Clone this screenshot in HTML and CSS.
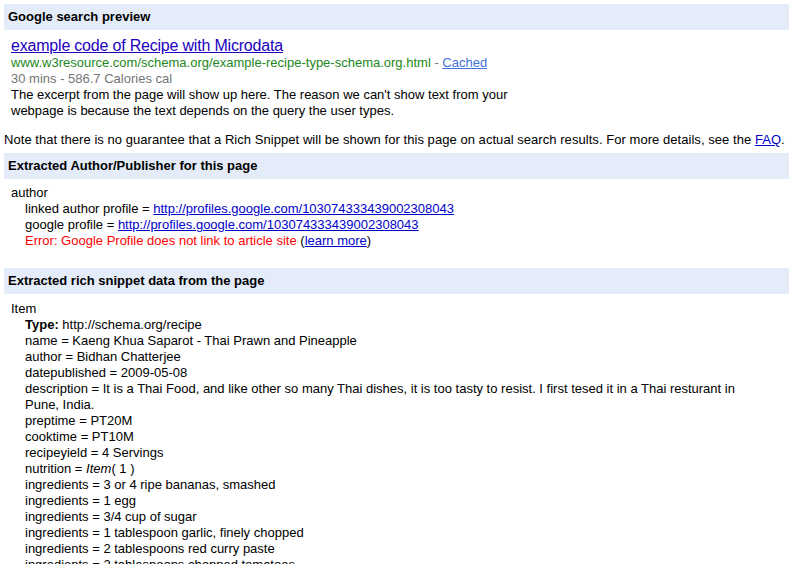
FILE: index.html
```html
<!DOCTYPE html>
<html>
<head>
<meta charset="utf-8">
<title>Rich Snippets Testing Tool</title>
<link rel="stylesheet" href="styles.css">
</head>
<body>
<div class="section-head">Google search preview</div>
<div class="preview">
  <div class="title"><a href="#">example code of Recipe with Microdata</a></div>
  <div class="url">www.w3resource.com/schema.org/example-recipe-type-schema.org.html<span class="sep"> - </span><a class="cached" href="#">Cached</a></div>
  <div class="meta">30 mins - 586.7 Calories cal</div>
  <div class="excerpt">The excerpt from the page will show up here. The reason we can't show text from your<br>webpage is because the text depends on the query the user types.</div>
</div>
<p class="note">Note that there is no guarantee that a Rich Snippet will be shown for this page on actual search results. For more details, see the <a href="#">FAQ</a>.</p>
<div class="section-head">Extracted Author/Publisher for this page</div>
<div class="block author-block">
  <div>author</div>
  <div class="indent">
    <div>linked author profile = <a href="#">http://profiles.google.com/103074333439002308043</a></div>
    <div>google profile = <a href="#">http://profiles.google.com/103074333439002308043</a></div>
    <div class="error">Error: Google Profile does not link to article site <span class="plain">(<a href="#">learn more</a>)</span></div>
  </div>
</div>
<div class="section-head">Extracted rich snippet data from the page</div>
<div class="block item-block">
  <div>Item</div>
  <div class="indent">
    <div><b>Type:</b> http://schema.org/recipe</div>
    <div>name = Kaeng Khua Saparot - Thai Prawn and Pineapple</div>
    <div>author = Bidhan Chatterjee</div>
    <div>datepublished = 2009-05-08</div>
    <div>description = It is a Thai Food, and like other so many Thai dishes, it is too tasty to resist. I first tesed it in a Thai resturant in Pune, India.</div>
    <div>preptime = PT20M</div>
    <div>cooktime = PT10M</div>
    <div>recipeyield = 4 Servings</div>
    <div>nutrition = <i>Item</i>( 1 )</div>
    <div>ingredients = 3 or 4 ripe bananas, smashed</div>
    <div>ingredients = 1 egg</div>
    <div>ingredients = 3/4 cup of sugar</div>
    <div>ingredients = 1 tablespoon garlic, finely chopped</div>
    <div>ingredients = 2 tablespoons red curry paste</div>
    <div>ingredients = 2 tablespoons chopped tomatoes</div>
    <div>ingredients = 1 cup coconut milk</div>
    <div>ingredients = 250 grams prawns</div>
  </div>
</div>
</body>
</html>
```
FILE: styles.css
```css
html, body {
  background: #fff;
}
body {
  margin: 4px 6px 0 4px;
  font-family: "Liberation Sans", Arial, sans-serif;
  font-size: 13px;
  line-height: 16px;
  color: #000;
}
a {
  color: #0000cc;
  text-decoration: underline;
}
.section-head {
  background: #e5ecf9;
  font-weight: bold;
  height: 26px;
  line-height: 26px;
  padding-left: 4px;
}
.preview {
  padding: 6px 7px 0 7px;
}
.title {
  font-size: 16px;
  line-height: 19px;
  letter-spacing: -0.2px;
}
.title a {
  color: #2200c1;
}
.url {
  color: #228822;
}
.url .sep {
  color: #767676;
}
.url a.cached {
  color: #4272db;
}
.meta {
  color: #767676;
}
.note {
  margin: 13px 0 5px 0;
  letter-spacing: 0.05px;
}
.block {
  padding: 6px 7px 0 7px;
}
.author-block {
  padding-bottom: 19px;
}
.item-block {
  padding-top: 7px;
  padding-right: 32px;
}
.indent {
  padding-left: 14px;
}
.error {
  color: #ff0000;
}
.error .plain {
  color: #000;
}
```
